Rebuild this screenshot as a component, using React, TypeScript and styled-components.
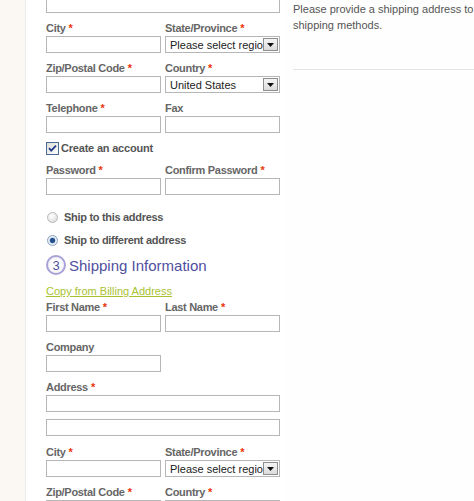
import React from "react";
import styled, { createGlobalStyle } from "styled-components";

const GlobalStyle = createGlobalStyle`
  html, body {
    margin: 0;
    padding: 0;
    background: #fefefe;
  }
  body {
    font-family: "Liberation Sans", Arial, sans-serif;
    overflow: hidden;
  }
`;

interface FieldProps {
    label: string;
    required?: boolean;
    children: React.ReactNode;
}

const Field = ({ label, required, children }: FieldProps) => (
    <FieldBox>
        <Label>
            {label}
            {required && <Star>*</Star>}
        </Label>
        {children}
    </FieldBox>
);

const Select = ({ value }: { value: string }) => (
    <SelectBox>
        <SelectValue>{value}</SelectValue>
        <DropButton>
            <svg width="7" height="4" viewBox="0 0 7 4">
                <path d="M0 0h7L3.5 4z" fill="#111" />
            </svg>
        </DropButton>
    </SelectBox>
);

const App = () => {
    return (
        <>
            <GlobalStyle />
            <Page>
                <Gutter />
                <MainColumn>
                    <Form>
                        <Input $wide />
                        <Row>
                            <Field label="City" required>
                                <Input />
                            </Field>
                            <Field label="State/Province" required>
                                <Select value="Please select region, state or province" />
                            </Field>
                        </Row>
                        <Row>
                            <Field label="Zip/Postal Code" required>
                                <Input />
                            </Field>
                            <Field label="Country" required>
                                <Select value="United States" />
                            </Field>
                        </Row>
                        <Row>
                            <Field label="Telephone" required>
                                <Input />
                            </Field>
                            <Field label="Fax">
                                <Input />
                            </Field>
                        </Row>
                        <CheckRow>
                            <svg width="13" height="13" viewBox="0 0 13 13">
                                <defs>
                                    <linearGradient id="cb" x1="0" y1="0" x2="1" y2="1">
                                        <stop offset="0" stopColor="#dcdcd7" />
                                        <stop offset="1" stopColor="#ffffff" />
                                    </linearGradient>
                                </defs>
                                <rect x="0.5" y="0.5" width="12" height="12" fill="url(#cb)" stroke="#4a6a95" />
                                <path d="M3 6.2l2.2 2.4L10 3.6" fill="none" stroke="#233c8c" strokeWidth="1.8" />
                            </svg>
                            Create an account
                        </CheckRow>
                        <Row>
                            <Field label="Password" required>
                                <Input />
                            </Field>
                            <Field label="Confirm Password" required>
                                <Input />
                            </Field>
                        </Row>
                        <RadioRow $first>
                            <RadioDot />
                            Ship to this address
                        </RadioRow>
                        <RadioRow>
                            <RadioDot $checked />
                            Ship to different address
                        </RadioRow>
                        <StepTitle>
                            <StepNumber>3</StepNumber>
                            Shipping Information
                        </StepTitle>
                        <CopyLink href="#">Copy from Billing Address</CopyLink>
                        <Row $flush>
                            <Field label="First Name" required>
                                <Input />
                            </Field>
                            <Field label="Last Name" required>
                                <Input />
                            </Field>
                        </Row>
                        <Row>
                            <Field label="Company">
                                <Input />
                            </Field>
                        </Row>
                        <FieldBox>
                            <Label>
                                Address<Star>*</Star>
                            </Label>
                            <AddressLines>
                                <Input $wide />
                                <Input $wide />
                            </AddressLines>
                        </FieldBox>
                        <Row $extra>
                            <Field label="City" required>
                                <Input />
                            </Field>
                            <Field label="State/Province" required>
                                <Select value="Please select region, state or province" />
                            </Field>
                        </Row>
                        <Row>
                            <Field label="Zip/Postal Code" required>
                                <Input />
                            </Field>
                            <Field label="Country" required>
                                <Select value="United States" />
                            </Field>
                        </Row>
                    </Form>
                </MainColumn>
                <SideColumn>
                    <SideText>
                        Please provide a shipping address to calculate shipping methods.
                    </SideText>
                    <SideRule />
                </SideColumn>
            </Page>
        </>
    );
};

const Page = styled.div`
  display: flex;
  height: 501px;
  overflow: hidden;
`;

const Gutter = styled.div`
  width: 25px;
  flex-shrink: 0;
  background: #fbf7f2;
  border-right: 1px solid #ebebeb;
`;

const MainColumn = styled.div`
  width: 240px;
  flex-shrink: 0;
  padding-left: 20px;
  background: #fff;
`;

const Form = styled.div`
  display: flex;
  flex-direction: column;
  margin-top: -4px;
  width: 234px;
`;

const Row = styled.div<{ $flush?: boolean; $extra?: boolean }>`
  display: grid;
  grid-template-columns: 115px 115px;
  column-gap: 4px;
  margin-top: ${p => (p.$flush ? "0" : p.$extra ? "8px" : "7px")};
`;

const FieldBox = styled.div`
  display: flex;
  flex-direction: column;
  margin-top: 7px;

  ${Row} > & {
    margin-top: 0;
  }
`;

const AddressLines = styled.div`
  display: flex;
  flex-direction: column;
  gap: 7px;
`;

const Label = styled.label`
  display: block;
  height: 16px;
  line-height: 16px;
  font-size: 11px;
  font-weight: bold;
  letter-spacing: -0.3px;
  color: #666;
`;

const Star = styled.span`
  color: #eb340a;
  margin-left: 3px;
`;

const Input = styled.input<{ $wide?: boolean }>`
  box-sizing: border-box;
  width: ${p => (p.$wide ? "234px" : "115px")};
  height: 17px;
  margin: 0;
  padding: 0 3px;
  border: 1px solid #b6b6b6;
  background: #fff;
  font: 11px "Liberation Sans", Arial, sans-serif;
`;

const SelectBox = styled.div`
  box-sizing: border-box;
  width: 115px;
  height: 17px;
  display: flex;
  align-items: center;
  border: 1px solid #b6b6b6;
  background: #fff;
  padding: 0 1px 0 4px;
  overflow: hidden;
`;

const SelectValue = styled.span`
  flex: 1;
  min-width: 0;
  overflow: hidden;
  white-space: nowrap;
  font-size: 11px;
  color: #222;
`;

const DropButton = styled.span`
  box-sizing: border-box;
  width: 15px;
  height: 13px;
  flex-shrink: 0;
  display: flex;
  align-items: center;
  justify-content: center;
  border: 1px solid #8d8d8d;
  background: linear-gradient(#f4f4f4, #dcdcdc);
`;

const CheckRow = styled.label`
  display: flex;
  align-items: center;
  gap: 2px;
  height: 16px;
  margin-top: 7px;
  margin-bottom: -1px;
  font-size: 11px;
  font-weight: bold;
  letter-spacing: -0.2px;
  color: #555;
`;

const RadioRow = styled.label<{ $first?: boolean }>`
  display: flex;
  align-items: center;
  gap: 6px;
  height: 16px;
  margin-top: ${p => (p.$first ? "14px" : "7px")};
  padding-left: 1px;
  font-size: 11px;
  font-weight: bold;
  letter-spacing: -0.3px;
  color: #555;
`;

const RadioDot = styled.span<{ $checked?: boolean }>`
  box-sizing: border-box;
  width: 11px;
  height: 11px;
  border-radius: 50%;
  border: 1px solid ${p => (p.$checked ? "#8aa2c4" : "#b8b8b8")};
  background: ${p =>
        p.$checked
            ? "radial-gradient(circle at 50% 50%, #1f4e8a 0 2px, #5b83b6 2.6px, #e6edf5 3.2px)"
            : "radial-gradient(circle at 40% 35%, #ffffff, #d6d6d6)"};
`;

const StepTitle = styled.h2`
  display: flex;
  align-items: center;
  gap: 3px;
  height: 20px;
  margin: 7px 0 0;
  font-size: 15px;
  font-weight: normal;
  color: #4f4f9f;
`;

const StepNumber = styled.span`
  box-sizing: border-box;
  width: 20px;
  height: 20px;
  border-radius: 50%;
  display: flex;
  align-items: center;
  justify-content: center;
  border: 2px solid #a9a2d6;
  background: radial-gradient(circle, #ffffff 40%, #e6e3f5);
  font-size: 13px;
  color: #4f4f9f;
`;

const CopyLink = styled.a`
  display: block;
  height: 16px;
  line-height: 16px;
  margin-top: 8px;
  font-size: 11px;
  color: #a8c22f;
  text-decoration: underline;
`;

const SideColumn = styled.div`
  flex: 1;
  min-width: 0;
  padding: 1px 0 0 7px;
  overflow: hidden;
`;

const SideText = styled.p`
  margin: 0;
  width: 240px;
  font-size: 11px;
  line-height: 16px;
  color: #555;
`;

const SideRule = styled.div`
  margin-top: 36px;
  width: 300px;
  border-top: 1px solid #e4e4e4;
`;

export default App;
